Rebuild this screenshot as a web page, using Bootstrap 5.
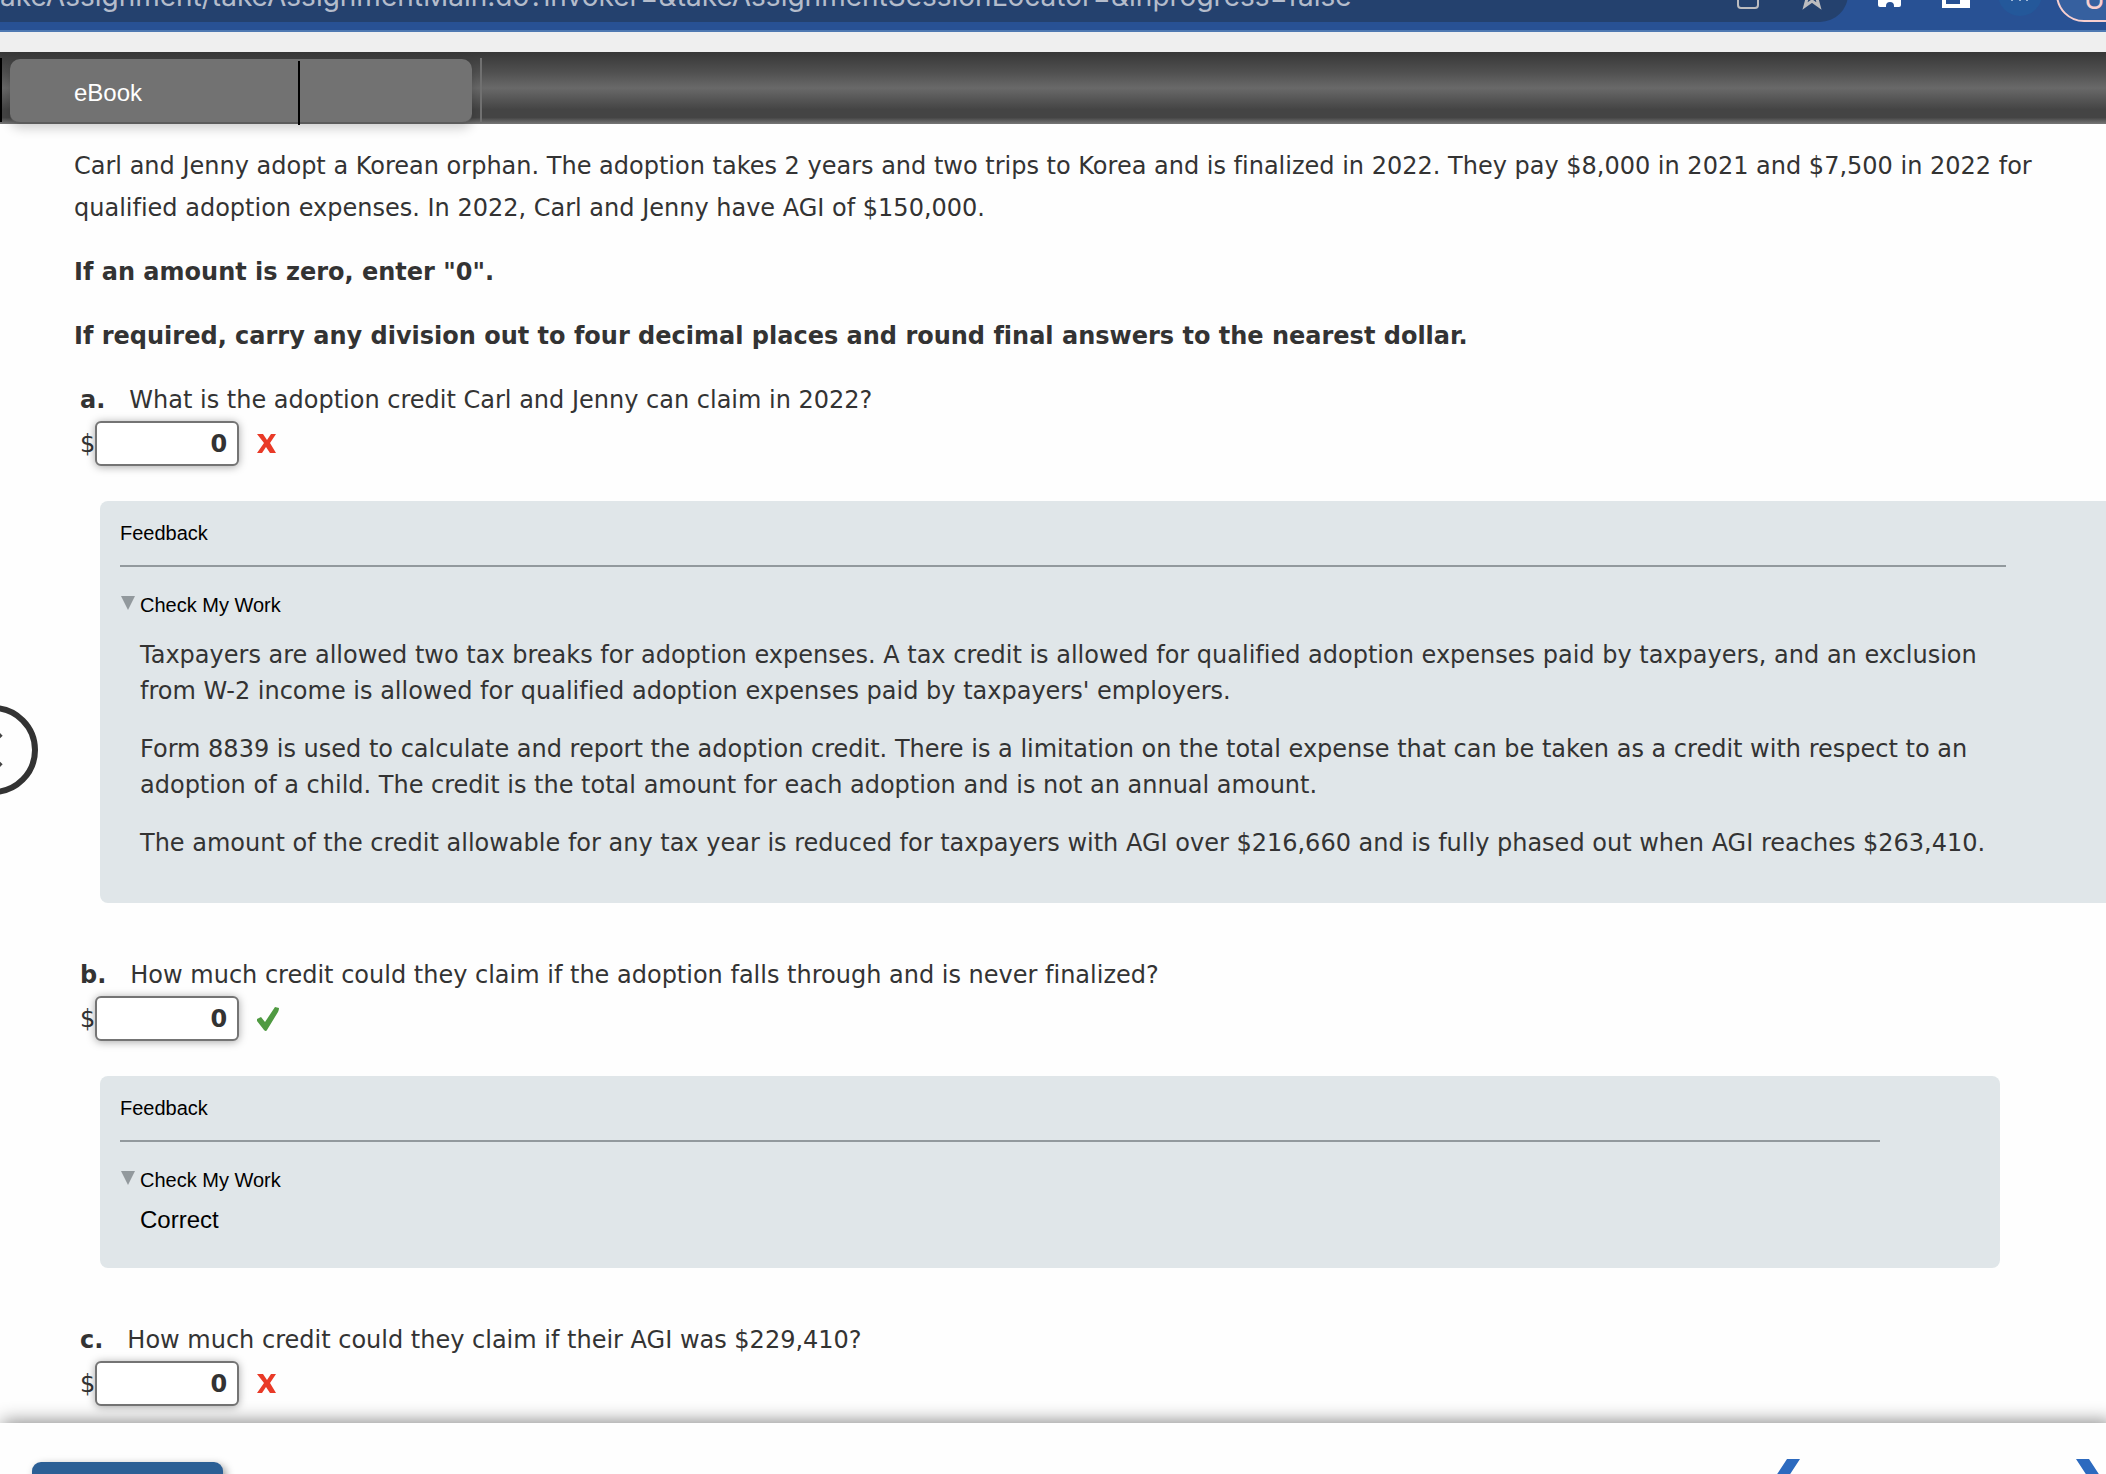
<!DOCTYPE html>
<html lang="en">
<head>
<meta charset="utf-8">
<meta name="viewport" content="width=device-width, initial-scale=1">
<title>Take Assignment</title>
<link href="https://cdn.jsdelivr.net/npm/bootstrap@5.3.0/dist/css/bootstrap.min.css" rel="stylesheet">
<style>
  body { font: 24px/42px "DejaVu Sans", Verdana, sans-serif; font-variant-ligatures: none; color: #333; background: #fefefe; }
  .viewport { height: 100vh; }
  .arial { font-family: "Liberation Sans", Arial, sans-serif; }

  /* browser bar */
  .browser { height: 32px; background: #285194; border-bottom: 2px solid #4f79b2; }
  .omnibox { width: 1848px; height: 56px; margin-top: -34px; background: #24416e; border-radius: 0 28px 28px 0; }
  .omnibox .url { flex: 1 1 0; min-width: 0; height: 56px; padding-top: 14px; font-family: Inter, "Liberation Sans", sans-serif; font-size: 28px; line-height: 32px; color: #b4bccb; white-space: nowrap; }
  .browser svg { flex: none; display: block; }
  .update { flex: none; width: 150px; height: 56px; margin-top: -34px; padding: 10px 0 0 26px; background: #36609f; border: 2px solid #f8cfcf; border-radius: 28px; color: #f8cfcf; font-family: Inter, "Liberation Sans", sans-serif; font-size: 28px; line-height: 32px; text-align: left; }
  .strip { height: 20px; background: #efefef; }

  /* tool bar */
  .toolbar-dark { height: 72px; padding-top: 6px; background: linear-gradient(#373737 0, #505050 28%, #696969 50%, #444 80%, #444 91%, #777 100%); }
  .edge { width: 2px; height: 64px; background: #000; }
  .edge.soft { background: #707070; margin-left: 8px; }
  .tabs { width: 462px; height: 65px; margin-top: 1px; margin-left: 8px; background: #727272; border-bottom: 2px solid #5c5c5c; border-radius: 10px; box-shadow: 0 4px 12px rgba(0,0,0,.2); }
  .tabs a { width: 288px; padding-left: 64px; line-height: 68px; color: #fff; text-decoration: none; }
  .tabs .divider { width: 2px; height: 64px; margin-top: 2px; background: #000; }

  /* question */
  .content { padding: 21px 36px 0 74px; }
  .content p { margin-bottom: 22px; }
  .ask { padding-left: 6px; gap: 24px; }
  .entry { padding-left: 6px; margin-bottom: 35px; height: 45px; }
  .entry input { width: 144px; height: 45px; padding: 0 10px; border: 2px solid #747474; border-radius: 6px; box-shadow: 0 1px 8px rgba(0,0,0,.35); text-align: right; font-weight: 700; color: #333; background: #fff; }
  .entry svg { margin-left: 17px; }
  .feedback { margin: 0 70px 51px 26px; padding: 20px 120px 30px 20px; background: #e0e6e9; border-radius: 8px; color: #000; }
  .feedback.wide { margin-right: -36px; padding-right: 100px; border-radius: 8px 0 0 8px; }
  .feedback h2, .feedback button { font-size: 20px; line-height: 24px; margin: 0; font-weight: 400; color: #000; }
  .feedback hr { margin: 20px 0 26px; border: 0; height: 2px; background: #92999d; opacity: 1; }
  .feedback button { display: flex; border: 0; padding: 0; background: none; }
  .explain { margin: 20px 0 12px 20px; line-height: 36px; color: #333; }
  .content .explain p:last-child { margin-bottom: 0; }
  .verdict { margin: 10px 0 0 20px; line-height: 36px; }

  .prev-page { position: absolute; left: -52px; top: 705px; width: 90px; height: 90px; padding: 0; border: 6px solid #333; border-radius: 50%; background: none; }

  /* footer */
  .foot { height: 51px; padding-left: 32px; background: #fefefe; box-shadow: 4px 0 18px 2px rgba(0,0,0,.45); }
  .foot .submit { width: 191px; height: 60px; margin-top: 39px; border: 0; border-radius: 9px; background: #2b5f95; box-shadow: 3px 3px 8px rgba(0,0,0,.4); }
  .foot .arrows { margin-top: 36px; gap: 270px; }
  .foot .arrows button { width: 30px; height: 40px; padding: 0; border: 0; background: none; }
  .foot svg { display: block; }
</style>
</head>
<body>
<div class="viewport d-flex flex-column overflow-hidden position-relative">
  <header class="browser d-flex align-items-start overflow-hidden flex-shrink-0">
    <div class="omnibox d-flex flex-shrink-0 overflow-hidden">
      <div class="url overflow-hidden"><span>akeAssignment/takeAssignmentMain.do?invoker=&amp;takeAssignmentSessionLocator=&amp;inprogress=false</span></div>
      <svg width="118" height="56" viewBox="0 -34 118 56" fill="none" stroke="#bcbcbf"><rect x="8" y="-18" width="20" height="26" rx="3" stroke-width="2"/><path d="M75 6l7-5 7 5-3-11 9-7H85l-3-8-3 8H69l9 7z" stroke-width="3"/></svg>
    </div>
    <svg width="200" height="30" viewBox="1848 0 200 30"><path d="M1878 0h23v5q0 2-2 2h-5v-1a4 4 0 0 0-8 0v1h-6q-2 0-2-2z" fill="#fff"/><path d="M1942 0h28v8h-28z" fill="#fff"/><path d="M1946 0h14v4h-14z" fill="#285194"/><circle cx="2020" cy="-6" r="22" fill="#24589a"/><path d="M2011 0h2v1h-2zM2019 0h2v1h-2zM2026 0h2v1h-2z" fill="#9db8d8"/></svg>
    <button type="button" class="update ms-2">Update</button>
  </header>
  <div class="strip flex-shrink-0"></div>
  <nav class="toolbar-dark d-flex flex-shrink-0" aria-label="Tools">
    <span class="edge"></span>
    <div class="tabs d-flex arial"><a href="#">eBook</a><span class="divider"></span></div>
    <span class="edge soft"></span>
  </nav>

  <main class="content flex-grow-1 overflow-hidden">
    <p>Carl and Jenny adopt a Korean orphan. The adoption takes 2 years and two trips to Korea and is finalized in 2022. They pay $8,000 in 2021 and $7,500 in 2022 for qualified adoption expenses. In 2022, Carl and Jenny have AGI of $150,000.</p>
    <p class="fw-bold">If an amount is zero, enter "0".</p>
    <p class="fw-bold">If required, carry any division out to four decimal places and round final answers to the nearest dollar.</p>

    <section>
      <div class="ask d-flex"><b>a.</b><label for="a">What is the adoption credit Carl and Jenny can claim in 2022?</label></div>
      <div class="entry d-flex align-items-center"><span>$</span><input id="a" type="text" value="0">
        <svg width="22" height="22" viewBox="0 0 22 22" role="img" aria-label="Incorrect"><path d="M1 1h6l4 6 4-6h5l-6 9 6 10h-6l-4-6-4 6H1l7-10z" fill="#e93a27"/></svg></div>
      <div class="feedback wide">
        <h2 class="arial">Feedback</h2><hr>
        <button type="button" class="arial"><svg width="20" height="24" aria-hidden="true"><path d="M1 3h14L8 17z" fill="#92999d"/></svg>Check My Work</button>
        <div class="explain">
          <p>Taxpayers are allowed two tax breaks for adoption expenses. A tax credit is allowed for qualified adoption expenses paid by taxpayers, and an exclusion from W-2 income is allowed for qualified adoption expenses paid by taxpayers' employers.</p>
          <p>Form 8839 is used to calculate and report the adoption credit. There is a limitation on the total expense that can be taken as a credit with respect to an adoption of a child. The credit is the total amount for each adoption and is not an annual amount.</p>
          <p>The amount of the credit allowable for any tax year is reduced for taxpayers with AGI over $216,660 and is fully phased out when AGI reaches $263,410.</p>
        </div>
      </div>
    </section>

    <section>
      <div class="ask d-flex"><b>b.</b><label for="b">How much credit could they claim if the adoption falls through and is never finalized?</label></div>
      <div class="entry d-flex align-items-center"><span>$</span><input id="b" type="text" value="0">
        <svg width="24" height="26" viewBox="0 0 24 26" role="img" aria-label="Correct"><path d="M1 13l4-2 4 5L19 1l4 1q0 2-1 4L11 24q-1 2-3 0L1 15z" fill="#4f9a41"/></svg></div>
      <div class="feedback">
        <h2 class="arial">Feedback</h2><hr>
        <button type="button" class="arial"><svg width="20" height="24" aria-hidden="true"><path d="M1 3h14L8 17z" fill="#92999d"/></svg>Check My Work</button>
        <div class="verdict arial">Correct</div>
      </div>
    </section>

    <section>
      <div class="ask d-flex"><b>c.</b><label for="c">How much credit could they claim if their AGI was $229,410?</label></div>
      <div class="entry d-flex align-items-center"><span>$</span><input id="c" type="text" value="0">
        <svg width="22" height="22" viewBox="0 0 22 22" role="img" aria-label="Incorrect"><path d="M1 1h6l4 6 4-6h5l-6 9 6 10h-6l-4-6-4 6H1l7-10z" fill="#e93a27"/></svg></div>
    </section>
  </main>

  <button type="button" class="prev-page" aria-label="Previous page"><svg class="d-block" width="78" height="78" viewBox="0 0 78 78"><path d="M47 23L29 39l18 16" fill="none" stroke="#444" stroke-width="5"/></svg></button>

  <footer class="foot d-flex justify-content-between align-items-start flex-shrink-0 position-relative">
    <button type="button" class="submit" aria-label="Check my work"></button>
    <div class="arrows d-flex">
      <button type="button" aria-label="Previous"><svg width="30" height="40"><path d="M11 0h13L7 26l17 14H11L-6 26z" fill="#2c6abf"/></svg></button>
      <button type="button" aria-label="Next"><svg width="30" height="40"><path d="M0 0h13l17 26-17 14H0l17-14z" fill="#2c6abf"/></svg></button>
    </div>
  </footer>
</div>
<script src="https://cdn.jsdelivr.net/npm/bootstrap@5.3.0/dist/js/bootstrap.bundle.min.js"></script>
</body>
</html>
